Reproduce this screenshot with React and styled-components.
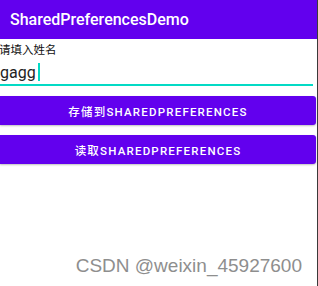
import React from 'react';
import styled, { createGlobalStyle } from 'styled-components';

const GlobalStyle = createGlobalStyle`
  html, body {
    margin: 0;
    padding: 0;
    background: #ffffff;
  }
`;

const Screen = styled.div`
  position: relative;
  width: 317px;
  height: 286px;
  border-right: 1px solid #3a3a3a;
  background: #ffffff;
  overflow: hidden;
  font-family: Roboto, 'Noto Sans CJK SC', sans-serif;
`;

const AppBar = styled.header`
  height: 39px;
  display: flex;
  align-items: center;
  padding-left: 10px;
  background-color: #6200ee;
  color: #ffffff;
  font-size: 16px;
  font-weight: 500;
`;

const Content = styled.div`
  display: flex;
  flex-direction: column;
  padding-top: 2px;
`;

const Label = styled.div`
  margin-left: -1px;
  font-family: 'Noto Sans CJK SC', sans-serif;
  font-size: 11.5px;
  line-height: 16px;
  color: #111111;
`;

const Field = styled.div`
  display: flex;
  align-items: center;
  height: 24px;
  margin-top: 3px;
  width: 313px;
  border-bottom: 2px solid #03dac5;
  font-size: 16px;
  color: #222222;
`;

const Cursor = styled.span`
  width: 2px;
  height: 18px;
  margin-left: 2px;
  background: #03dac5;
`;

const Buttons = styled.div`
  display: flex;
  flex-direction: column;
  gap: 10px;
  margin-top: 10px;
`;

const Button = styled.button`
  width: 316px;
  height: 29px;
  border: none;
  border-radius: 0 3px 3px 0;
  background-color: #6200ee;
  color: #ffffff;
  font-family: Roboto, 'Noto Sans CJK SC', sans-serif;
  font-size: 11.5px;
  font-weight: 500;
  letter-spacing: 1.2px;
  text-transform: uppercase;
  box-shadow: 0 1px 2px rgba(0, 0, 0, 0.25);
  padding: 0;
`;

const Watermark = styled.div`
  position: absolute;
  right: 15px;
  top: 255px;
  font-family: 'Liberation Sans', Arial, sans-serif;
  font-size: 19px;
  color: #8e8e8e;
  text-shadow: 0 0 1px rgba(255, 255, 255, 0.8);
`;

const App = () => {
  return (
    <>
      <GlobalStyle />
      <Screen>
        <AppBar>SharedPreferencesDemo</AppBar>
        <Content>
          <Label>请填入姓名</Label>
          <Field>
            gagg
            <Cursor />
          </Field>
          <Buttons>
            <Button>存储到SharedPreferences</Button>
            <Button>读取SharedPreferences</Button>
          </Buttons>
        </Content>
        <Watermark>CSDN @weixin_45927600</Watermark>
      </Screen>
    </>
  );
};

export default App;
